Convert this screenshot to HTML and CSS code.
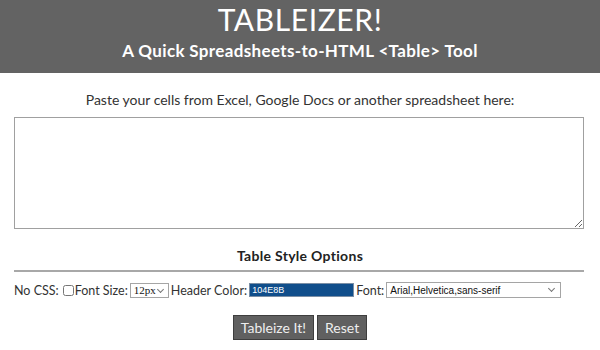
FILE: index.html
```html
<!DOCTYPE html>
<html>
<head>
<meta charset="utf-8">
<link rel="stylesheet" href="styles.css">
</head>
<body>
<header class="banner">
  <h1 class="title">TABLEIZER!</h1>
  <h2 class="subtitle">A Quick Spreadsheets-to-HTML &lt;Table&gt; Tool</h2>
</header>
<main class="content">
  <p class="prompt">Paste your cells from Excel, Google Docs or another spreadsheet here:</p>
  <textarea class="cells"></textarea>
  <h3 class="options-title">Table Style Options</h3>
  <hr class="rule">
  <div class="options">
    <span class="lbl">No CSS:</span><input type="checkbox" class="chk"><span class="lbl">Font Size:</span><span class="sel-wrap size-wrap"><select class="size"><option>12px</option></select></span><span class="lbl">Header Color:</span><input type="text" class="color" value="104E8B"><span class="lbl">Font:</span><span class="sel-wrap font-wrap"><select class="font"><option>Arial,Helvetica,sans-serif</option></select></span>
  </div>
  <div class="actions">
    <button class="btn">Tableize It!</button><button class="btn">Reset</button>
  </div>
</main>
</body>
</html>
```
FILE: styles.css
```css
html, body {
  margin: 0;
  padding: 0;
  background: #fff;
  font-family: "Lato", "Open Sans", sans-serif;
  color: #333;
}
.banner {
  background: #636363;
  height: 73px;
  text-align: center;
  color: #fff;
  box-sizing: border-box;
  padding-top: 2px;
}
.title {
  margin: 0;
  font-size: 30px;
  font-weight: 400;
  line-height: 34px;
  letter-spacing: 0.6px;
}
.subtitle {
  margin: 4px 0 0;
  font-size: 17px;
  font-weight: 700;
  line-height: 22px;
  letter-spacing: 0.35px;
}
.content {
  padding: 0 14px;
}
.prompt {
  margin: 17px 0 0;
  text-align: center;
  font-size: 14px;
  line-height: 20px;
  color: #333;
}
.cells {
  display: block;
  box-sizing: border-box;
  width: 570px;
  height: 112px;
  margin: 7px 0 0;
  border: 1px solid #a0a0a0;
  resize: vertical;
}
.options-title {
  margin: 18px 0 0;
  text-align: center;
  font-size: 14px;
  font-weight: 700;
  line-height: 18px;
  color: #222;
  letter-spacing: 0.3px;
}
.rule {
  margin: 5px 2px 0 0;
  border: 0;
  border-top: 2px solid #a8a8a8;
  height: 0;
}
.options {
  margin-top: 9px;
  display: flex;
  align-items: center;
  font-size: 12.5px;
  color: #333;
  height: 18px;
  white-space: nowrap;
}
.options > * {
  flex: none;
}
.lbl {
  margin-right: 2px;
}
.chk {
  margin: 0 1px 0 2px;
  width: 11px;
  height: 11px;
}
.sel-wrap {
  position: relative;
  display: inline-block;
}
.sel-wrap::after {
  content: "";
  position: absolute;
  top: 4px;
  width: 4px;
  height: 4px;
  border-right: 1px solid #777;
  border-bottom: 1px solid #777;
  transform: rotate(45deg);
  pointer-events: none;
}
.size-wrap {
  margin-right: 2px;
}
.size-wrap::after {
  right: 6px;
}
.font-wrap::after {
  right: 7px;
}
.size, .font {
  -webkit-appearance: none;
  appearance: none;
  display: block;
  box-sizing: border-box;
  background: #fff;
  border: 1px solid #a5a5a5;
  border-radius: 0;
  color: #111;
  padding: 0 0 0 3px;
}
.size {
  font-family: "Liberation Serif", serif;
  font-size: 11px;
  height: 15px;
  width: 39px;
}
.color {
  box-sizing: border-box;
  width: 105px;
  height: 14px;
  background: #104E8B;
  color: #fff;
  border: 1px solid #7a8ea5;
  font-family: "Liberation Sans", sans-serif;
  font-size: 9px;
  padding: 0 2px;
  margin-right: 2px;
}
.font {
  width: 175px;
  height: 16px;
  font-family: "Liberation Sans", sans-serif;
  font-size: 10px;
}
.actions {
  margin-top: 16px;
  display: flex;
  justify-content: center;
  gap: 3px;
}
.btn {
  background: #606060;
  color: #eee;
  border: 1px solid #3e3e3e;
  font-family: "Lato", sans-serif;
  font-size: 14px;
  height: 25px;
  padding: 0 7px;
}
```
